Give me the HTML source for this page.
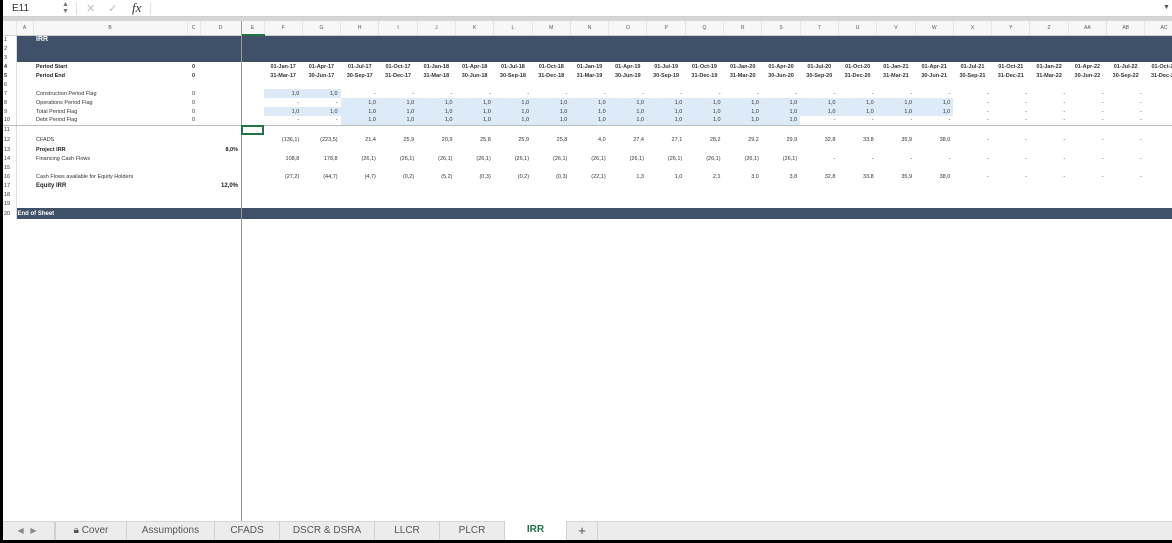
<!DOCTYPE html>
<html><head><meta charset="utf-8">
<style>
*{margin:0;padding:0;box-sizing:border-box}
body{width:1172px;height:543px;overflow:hidden;background:#fff;font-family:"Liberation Sans",sans-serif;position:relative}
#fb{position:absolute;left:0;top:0;width:1172px;height:17px;background:#fff;border-bottom:1px solid #d0d0d0}
#fb span{position:absolute;top:3px;font-size:10px;color:#333}
#fb i{position:absolute;top:3px;width:1px;height:12px;background:#e0e0e0}
#gbar{position:absolute;left:0;top:17px;width:1172px;height:4px;background:#d6d6d6}
#grid{position:absolute;left:0;top:21px;overflow:hidden;width:1172px;height:500px}
table{border-collapse:collapse;table-layout:fixed;width:1183px}
td{font-size:5.5px;line-height:8px;height:9px;white-space:nowrap;overflow:hidden;padding:0 3px;text-align:right;color:#333}
tr.h td{height:14px;background:#f7f7f7;border-right:1px solid #e6e6e6;border-bottom:1px solid #cfcfcf;text-align:center;color:#555;font-size:5px}
td.rh{text-align:left;padding-left:4px;color:#333;background:#fff;border-right:1px solid #ddd}
tr.d td{background:#3f5168;color:#fff}
tr.d td.rh{background:#fff;color:#333}
.b{font-weight:bold;color:#222}
.l{text-align:left}
.c{text-align:center}
.bl{background:#dcebf7}
.ln td{border-bottom:1px solid #bbb}
#frz{position:absolute;left:241px;top:21px;width:1px;height:500px;background:#999}
#sel{position:absolute;left:241px;top:125px;width:23px;height:10px;border:2px solid #217346}
#tabs{position:absolute;left:0;top:521px;width:1172px;height:19px;background:#ececec;border-top:1px solid #d4d4d4}
#tabs div{position:absolute;top:0;height:19px;font-size:10px;line-height:18px;color:#555;text-align:center;border-right:1px solid #d0d0d0}
#blk{position:absolute;left:0;top:540px;width:1172px;height:3px;background:#000}
#lb{position:absolute;left:0;top:0;width:3px;height:543px;background:#000}
</style></head><body>
<div id="fb">
<span style="left:12px">E11</span>
<span style="left:62px;font-size:7px;top:1px;line-height:7px;color:#777">▲<br>▼</span>
<i style="left:76px"></i>
<span style="left:86px;color:#bbb;font-size:11px;top:2px">✕</span>
<span style="left:108px;color:#bbb;font-size:11px;top:2px">✓</span>
<span style="left:132px;font-family:'Liberation Serif',serif;font-style:italic;font-size:13px;top:0px">fx</span>
<i style="left:150px"></i>
<span style="left:1163px;font-size:7px;top:4px;color:#555">▼</span>
</div>
<div id="gbar"></div>
<div id="grid">
<table>
<colgroup><col style="width:16px"><col style="width:17px"><col style="width:154px"><col style="width:13px"><col style="width:41px"><col style="width:23px">
<col style="width:38.3px"><col style="width:38.3px"><col style="width:38.3px"><col style="width:38.3px"><col style="width:38.3px"><col style="width:38.3px"><col style="width:38.3px"><col style="width:38.3px"><col style="width:38.3px"><col style="width:38.3px"><col style="width:38.3px"><col style="width:38.3px"><col style="width:38.3px"><col style="width:38.3px"><col style="width:38.3px"><col style="width:38.3px"><col style="width:38.3px"><col style="width:38.3px"><col style="width:38.3px"><col style="width:38.3px"><col style="width:38.3px"><col style="width:38.3px"><col style="width:38.3px"><col style="width:38.3px"></colgroup>
<tr class="h"><td></td><td>A</td><td>B</td><td>C</td><td>D</td><td style="border-bottom:2px solid #217346">E</td><td>F</td><td>G</td><td>H</td><td>I</td><td>J</td><td>K</td><td>L</td><td>M</td><td>N</td><td>O</td><td>P</td><td>Q</td><td>R</td><td>S</td><td>T</td><td>U</td><td>V</td><td>W</td><td>X</td><td>Y</td><td>Z</td><td>AA</td><td>AB</td><td>AC</td></tr>
<tr class="d"><td class="rh">1</td><td></td><td class="l b" style="color:#fff;font-size:7px">IRR</td><td colspan="27"></td></tr>
<tr class="d"><td class="rh">2</td><td colspan="29"></td></tr>
<tr class="d"><td class="rh">3</td><td colspan="29"></td></tr>
<tr class="b"><td class="rh">4</td><td></td><td class="l b">Period Start</td><td class="c">0</td><td></td><td></td><td class="c">01-Jan-17</td><td class="c">01-Apr-17</td><td class="c">01-Jul-17</td><td class="c">01-Oct-17</td><td class="c">01-Jan-18</td><td class="c">01-Apr-18</td><td class="c">01-Jul-18</td><td class="c">01-Oct-18</td><td class="c">01-Jan-19</td><td class="c">01-Apr-19</td><td class="c">01-Jul-19</td><td class="c">01-Oct-19</td><td class="c">01-Jan-20</td><td class="c">01-Apr-20</td><td class="c">01-Jul-20</td><td class="c">01-Oct-20</td><td class="c">01-Jan-21</td><td class="c">01-Apr-21</td><td class="c">01-Jul-21</td><td class="c">01-Oct-21</td><td class="c">01-Jan-22</td><td class="c">01-Apr-22</td><td class="c">01-Jul-22</td><td class="c">01-Oct-22</td></tr>
<tr class="b"><td class="rh">5</td><td></td><td class="l b">Period End</td><td class="c">0</td><td></td><td></td><td class="c">31-Mar-17</td><td class="c">30-Jun-17</td><td class="c">30-Sep-17</td><td class="c">31-Dec-17</td><td class="c">31-Mar-18</td><td class="c">30-Jun-18</td><td class="c">30-Sep-18</td><td class="c">31-Dec-18</td><td class="c">31-Mar-19</td><td class="c">30-Jun-19</td><td class="c">30-Sep-19</td><td class="c">31-Dec-19</td><td class="c">31-Mar-20</td><td class="c">30-Jun-20</td><td class="c">30-Sep-20</td><td class="c">31-Dec-20</td><td class="c">31-Mar-21</td><td class="c">30-Jun-21</td><td class="c">30-Sep-21</td><td class="c">31-Dec-21</td><td class="c">31-Mar-22</td><td class="c">30-Jun-22</td><td class="c">30-Sep-22</td><td class="c">31-Dec-22</td></tr>
<tr><td class="rh">6</td><td colspan="29"></td></tr>
<tr><td class="rh">7</td><td></td><td class="l">Construction Period Flag</td><td class="c">0</td><td></td><td></td><td class="bl">1,0</td><td class="bl">1,0</td><td>-</td><td>-</td><td>-</td><td>-</td><td>-</td><td>-</td><td>-</td><td>-</td><td>-</td><td>-</td><td>-</td><td>-</td><td>-</td><td>-</td><td>-</td><td>-</td><td>-</td><td>-</td><td>-</td><td>-</td><td>-</td><td>-</td></tr>
<tr><td class="rh">8</td><td></td><td class="l">Operations Period Flag</td><td class="c">0</td><td></td><td></td><td>-</td><td>-</td><td class="bl">1,0</td><td class="bl">1,0</td><td class="bl">1,0</td><td class="bl">1,0</td><td class="bl">1,0</td><td class="bl">1,0</td><td class="bl">1,0</td><td class="bl">1,0</td><td class="bl">1,0</td><td class="bl">1,0</td><td class="bl">1,0</td><td class="bl">1,0</td><td class="bl">1,0</td><td class="bl">1,0</td><td class="bl">1,0</td><td class="bl">1,0</td><td>-</td><td>-</td><td>-</td><td>-</td><td>-</td><td>-</td></tr>
<tr><td class="rh">9</td><td></td><td class="l">Total Period Flag</td><td class="c">0</td><td></td><td></td><td class="bl">1,0</td><td class="bl">1,0</td><td class="bl">1,0</td><td class="bl">1,0</td><td class="bl">1,0</td><td class="bl">1,0</td><td class="bl">1,0</td><td class="bl">1,0</td><td class="bl">1,0</td><td class="bl">1,0</td><td class="bl">1,0</td><td class="bl">1,0</td><td class="bl">1,0</td><td class="bl">1,0</td><td class="bl">1,0</td><td class="bl">1,0</td><td class="bl">1,0</td><td class="bl">1,0</td><td>-</td><td>-</td><td>-</td><td>-</td><td>-</td><td>-</td></tr>
<tr class="ln"><td class="rh">10</td><td></td><td class="l">Debt Period Flag</td><td class="c">0</td><td></td><td></td><td>-</td><td>-</td><td class="bl">1,0</td><td class="bl">1,0</td><td class="bl">1,0</td><td class="bl">1,0</td><td class="bl">1,0</td><td class="bl">1,0</td><td class="bl">1,0</td><td class="bl">1,0</td><td class="bl">1,0</td><td class="bl">1,0</td><td class="bl">1,0</td><td class="bl">1,0</td><td>-</td><td>-</td><td>-</td><td>-</td><td>-</td><td>-</td><td>-</td><td>-</td><td>-</td><td>-</td></tr>
<tr style="height:10px"><td class="rh">11</td><td colspan="29"></td></tr>
<tr style="height:10px"><td class="rh">12</td><td></td><td class="l">CFADS</td><td></td><td></td><td></td><td>(136,1)</td><td>(223,5)</td><td>21,4</td><td>25,9</td><td>20,9</td><td>25,8</td><td>25,9</td><td>25,8</td><td>4,0</td><td>27,4</td><td>27,1</td><td>28,2</td><td>29,2</td><td>29,9</td><td>32,8</td><td>33,8</td><td>35,9</td><td>38,0</td><td>-</td><td>-</td><td>-</td><td>-</td><td>-</td><td>-</td></tr>
<tr><td class="rh">13</td><td></td><td class="l b">Project IRR</td><td></td><td class="b">8,0%</td><td colspan="25"></td></tr>
<tr><td class="rh">14</td><td></td><td class="l">Financing Cash Flows</td><td></td><td></td><td></td><td>108,8</td><td>178,8</td><td>(26,1)</td><td>(26,1)</td><td>(26,1)</td><td>(26,1)</td><td>(26,1)</td><td>(26,1)</td><td>(26,1)</td><td>(26,1)</td><td>(26,1)</td><td>(26,1)</td><td>(26,1)</td><td>(26,1)</td><td>-</td><td>-</td><td>-</td><td>-</td><td>-</td><td>-</td><td>-</td><td>-</td><td>-</td><td>-</td></tr>
<tr><td class="rh">15</td><td colspan="29"></td></tr>
<tr><td class="rh">16</td><td></td><td class="l">Cash Flows available for  Equity Holders</td><td></td><td></td><td></td><td>(27,2)</td><td>(44,7)</td><td>(4,7)</td><td>(0,2)</td><td>(5,2)</td><td>(0,3)</td><td>(0,2)</td><td>(0,3)</td><td>(22,1)</td><td>1,3</td><td>1,0</td><td>2,1</td><td>3,0</td><td>3,8</td><td>32,8</td><td>33,8</td><td>35,9</td><td>38,0</td><td>-</td><td>-</td><td>-</td><td>-</td><td>-</td><td>-</td></tr>
<tr><td class="rh">17</td><td></td><td class="l b" style="font-size:6px">Equity IRR</td><td></td><td class="b" style="font-size:6px">12,0%</td><td colspan="25"></td></tr>
<tr><td class="rh">18</td><td colspan="29"></td></tr>
<tr><td class="rh">19</td><td colspan="29"></td></tr>
<tr class="d" style="height:11px"><td class="rh">20</td><td colspan="2" class="l b" style="color:#fff;padding-left:1px;font-size:6px">End of Sheet</td><td colspan="27"></td></tr>
</table>
</div>
<div id="frz"></div>
<div id="sel"></div>
<div id="tabs">
<div style="left:0;width:55px;color:#888;font-size:8px">◀ &nbsp; ▶</div>
<div style="left:55px;width:72px;border-left:1px solid #d0d0d0">🔒︎ Cover</div>
<div style="left:127px;width:88px">Assumptions</div>
<div style="left:215px;width:65px">CFADS</div>
<div style="left:280px;width:95px">DSCR &amp; DSRA</div>
<div style="left:375px;width:65px">LLCR</div>
<div style="left:440px;width:65px">PLCR</div>
<div style="left:505px;width:62px;background:#fff;color:#217346;font-weight:bold;top:-1px;height:20px">IRR</div>
<div style="left:567px;width:31px;font-size:13px;color:#444">+</div>
</div>
<div id="blk"></div>
<div id="lb"></div>
</body></html>
